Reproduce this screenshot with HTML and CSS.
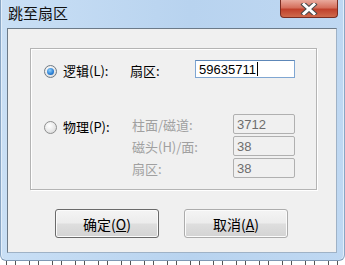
FILE: index.html
```html
<!DOCTYPE html>
<html lang="zh-CN">
<head>
    <meta charset="UTF-8">
    <title>跳至扇区</title>
    <link rel="stylesheet" href="styles.css">
</head>
<body>
    <div class="window">
        <div class="titlebar">
            <div class="title">跳至扇区</div>
            <div class="close-btn">
                <svg width="18" height="12" viewBox="0 0 18 12">
                    <path d="M4 1.5 L14 10.5 M14 1.5 L4 10.5" stroke="#4a4a4a" stroke-width="5" stroke-linecap="square"/>
                    <path d="M4 1.5 L14 10.5 M14 1.5 L4 10.5" stroke="#ffffff" stroke-width="3" stroke-linecap="square"/>
                </svg>
            </div>
        </div>

        <div class="client">
            <div class="groupbox">
                <!-- logical sector -->
                <div class="row-logical">
                    <div class="choice choice-logical">
                        <span class="radio on"></span>
                        <span>逻辑(L):</span>
                    </div>
                    <div class="field-label">扇区:</div>
                    <div class="edit focused">59635711<span class="caret"></span></div>
                </div>

                <!-- physical CHS -->
                <div class="row-physical">
                    <div class="choice choice-physical">
                        <span class="radio"></span>
                        <span>物理(P):</span>
                    </div>
                    <div class="chs-list">
                        <div class="chs-row">
                            <div class="field-label disabled">柱面/磁道:</div>
                            <div class="edit off">3712</div>
                        </div>
                        <div class="chs-row">
                            <div class="field-label disabled">磁头(H)/面:</div>
                            <div class="edit off">38</div>
                        </div>
                        <div class="chs-row">
                            <div class="field-label disabled">扇区:</div>
                            <div class="edit off">38</div>
                        </div>
                    </div>
                </div>
            </div>

            <div class="buttons">
                <div class="btn default">确定(<u>O</u>)</div>
                <div class="btn">取消(<u>A</u>)</div>
            </div>
        </div>
    </div>
    <!-- tops of the window behind -->
    <div class="behind"></div>
</body>
</html>
```

FILE: styles.css
```css
body {
    margin: 0;
    background: #ffffff;
    font-family: "Noto Sans CJK SC", "Noto Sans", sans-serif;
    font-size: 13px;
    color: #000;
}
.window {
    width: 345px;
    height: 261px;
    box-sizing: border-box;
    padding: 0 8px 8px 7px;
    background: linear-gradient(to right, #c9dff5, #b8d3ef 55%, #bfd8f2);
    border-left: 1px solid #8aa6c4;
    border-right: 1px solid #8aa6c4;
    border-bottom: 1px solid #7f98b4;
    border-radius: 0 0 6px 6px;
    box-shadow: inset 1px 0 #e3eefa, inset -1px 0 #e3eefa;
}
.titlebar {
    height: 28px;
    display: flex;
    justify-content: space-between;
    align-items: flex-start;
}
.title {
    font-size: 15px;
    line-height: 17px;
    padding-top: 4px;
    color: #111;
}
.close-btn {
    width: 58px;
    height: 18px;
    margin-right: -2px;
    box-sizing: border-box;
    border: 1px solid #7a2d22;
    border-top: none;
    border-radius: 0 0 4px 4px;
    background: linear-gradient(#e9a99c, #d5705d 45%, #c0412c 55%, #cf6a4c);
    display: flex;
    justify-content: center;
    align-items: center;
}
.client {
    width: 330px;
    height: 225px;
    margin-left: -1px;
    box-sizing: border-box;
    background: #f0f0f0;
    border-top: 1px solid #6c7a88;
    border-left: 1px solid #6c7a88;
    border-right: 1px solid #9fb2c6;
    border-bottom: 1px solid #9fb2c6;
}
.groupbox {
    width: 287px;
    height: 142px;
    box-sizing: border-box;
    margin: 19px 0 0 22px;
    padding: 11px 0 0 13px;
    border: 1px solid #b4b4b4;
    box-shadow: inset 1px 1px #ffffff, 1px 1px #ffffff;
}
.row-logical {
    display: flex;
    align-items: flex-start;
    height: 18px;
}
.row-physical {
    display: flex;
    align-items: flex-start;
    margin-top: 36px;
}
.choice {
    display: flex;
    align-items: center;
    gap: 6px;
    line-height: 14px;
}
.choice-logical {
    width: 86px;
    margin-top: 4px;
}
.choice-physical {
    width: 88px;
    margin-top: 6px;
}
.radio {
    width: 13px;
    height: 13px;
    box-sizing: border-box;
    border-radius: 50%;
    border: 1px solid #8e8f8f;
    background: radial-gradient(circle at 40% 35%, #ffffff, #e6e6e6 60%, #cfcfcf);
    display: flex;
    justify-content: center;
    align-items: center;
}
.radio.on {
    border-color: #6f7a84;
}
.radio.on::after {
    content: "";
    width: 7px;
    height: 7px;
    border-radius: 50%;
    background: radial-gradient(circle at 40% 35%, #8fd0fb, #2a7ed4 60%, #14529a);
}
.field-label {
    width: 65px;
    line-height: 14px;
    margin-top: 4px;
}
.field-label.disabled {
    width: 101px;
    color: #a0a0a0;
}
.edit {
    box-sizing: border-box;
    font-family: "Liberation Sans", Arial, sans-serif;
    padding-left: 3px;
    display: flex;
    align-items: center;
}
.edit.focused {
    width: 100px;
    height: 18px;
    background: #fff;
    border: 1px solid #7fa6d2;
    border-top-color: #5d87b8;
    font-size: 13px;
}
.caret {
    width: 1px;
    height: 14px;
    margin-left: 1px;
    background: #000;
}
.edit.off {
    width: 62px;
    height: 20px;
    background: #f0f0f0;
    border: 1px solid #b0b0b0;
    border-radius: 2px;
    color: #6d6d6d;
    font-size: 13px;
}
.chs-list {
    display: flex;
    flex-direction: column;
    gap: 2px;
}
.chs-row {
    display: flex;
    align-items: flex-start;
}
.buttons {
    display: flex;
    gap: 25px;
    margin: 19px 0 0 47px;
}
.btn {
    width: 104px;
    height: 29px;
    box-sizing: border-box;
    border: 1px solid #acacac;
    border-radius: 3px;
    background: linear-gradient(#f4f4f4, #ececec 48%, #dedede 52%, #d3d3d3);
    box-shadow: inset 0 0 0 1px #fbfbfb;
    display: flex;
    justify-content: center;
    align-items: center;
    font-size: 14px;
}
.btn.default {
    border-color: #6a6a6a;
}
.btn u {
    text-underline-offset: 1px;
}
.behind {
    height: 4px;
    margin: 0 6px;
    background: repeating-linear-gradient(to right, #2a2a2a 0 1px, transparent 1px 9px, #2a2a2a 9px 10px, transparent 10px 23px);
    opacity: 0.8;
}
```
